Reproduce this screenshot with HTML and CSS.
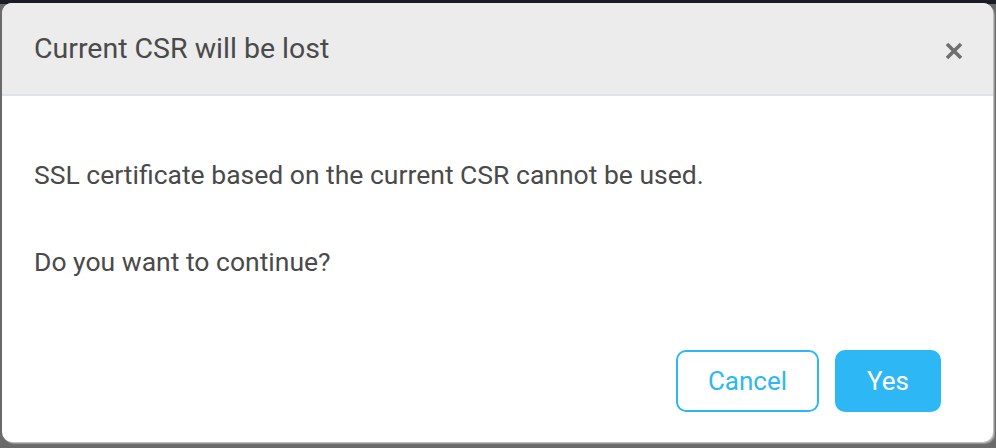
FILE: index.html
```html
<!DOCTYPE html>
<html>
<head>
<meta charset="utf-8">
<link rel="stylesheet" href="styles.css">
</head>
<body>
<div class="page">
  <div class="dialog">
    <div class="header">
      <h1 class="title">Current CSR will be lost</h1>
      <button class="close" aria-label="Close">
        <svg width="18" height="18" viewBox="0 0 18 18"><path d="M2 2 L16 16 M16 2 L2 16" stroke="#6f6f6f" stroke-width="3.6" stroke-linecap="butt"/></svg>
      </button>
    </div>
    <div class="content">
      <p class="msg first">SSL certificate based on the current CSR cannot be used.</p>
      <p class="msg second">Do you want to continue?</p>
    </div>
    <div class="footer">
      <button class="btn cancel">Cancel</button>
      <button class="btn yes">Yes</button>
    </div>
  </div>
  <div class="under">Transmit Cmm in interval</div>
</div>
</body>
</html>
```
FILE: styles.css
```css
html, body {
  margin: 0;
  padding: 0;
  height: 448px;
  overflow: hidden;
}
body {
  background: #6a6a6a;
  font-family: Roboto, "Liberation Sans", sans-serif;
}
.page {
  height: 448px;
  overflow: hidden;
  background: linear-gradient(#1b1b28 0, #1b1b28 4px, #6a6a6a 4px);
  padding: 3px 3px 0 2px;
  box-sizing: border-box;
}
.dialog {
  height: 439px;
  background: #fff;
  border-radius: 10px;
  overflow: hidden;
  display: flex;
  flex-direction: column;
  box-shadow: 1px 1px 0 #bdbdbd, 2px 2px 1px #9a9a9a;
}
.header {
  height: 91px;
  flex: none;
  background: #ececec;
  border-bottom: 2px solid #dfe3e7;
  display: flex;
  align-items: center;
  justify-content: space-between;
  padding: 0 30px 0 32px;
}
.title {
  margin: 0;
  font-size: 28.5px;
  line-height: 34px;
  font-weight: 400;
  color: #4a4a4a;
}
.close {
  border: 0;
  background: transparent;
  padding: 0;
  margin-top: 4px;
  width: 18px;
  height: 18px;
  display: flex;
}
.content {
  padding: 64px 32px 0;
  flex: none;
}
.msg {
  margin: 0;
  font-size: 26.5px;
  line-height: 30px;
  color: #4a4a4a;
}
.msg.second {
  margin-top: 57px;
}
.footer {
  display: flex;
  justify-content: flex-end;
  gap: 16px;
  padding: 0 52px 0 0;
  margin-top: 73px;
}
.btn {
  height: 62px;
  border-radius: 10px;
  font-family: Roboto, "Liberation Sans", sans-serif;
  font-size: 26px;
  border: 2px solid #2db8f5;
  box-sizing: border-box;
  cursor: pointer;
}
.cancel {
  width: 143px;
  background: #fff;
  color: #2db8f5;
}
.yes {
  width: 106px;
  background: #2db8f5;
  color: #fff;
}
.under {
  padding-left: 223px;
  margin-top: 1px;
  font-size: 26px;
  line-height: 30px;
  color: #1a1a1a;
}
```
